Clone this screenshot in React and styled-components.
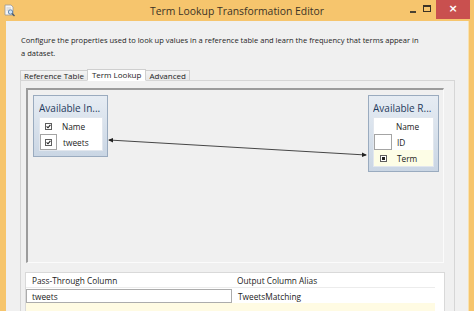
import React from 'react';
import styled, { createGlobalStyle } from 'styled-components';

const Global = createGlobalStyle`
  html, body { margin: 0; padding: 0; background: #f6c56d; }
  body { width: 474px; height: 311px; overflow: hidden; font-family: "Open Sans", "Noto Sans", sans-serif; }
`;

const Window = styled.div`
  width: 474px;
  height: 311px;
  display: flex;
  flex-direction: column;
  background: #f6c56d;
  overflow: hidden;
`;

const TitleBar = styled.div`
  height: 21px;
  width: 474px;
  flex: none;
  display: grid;
  grid-template-columns: 70px 334px 70px;
  align-items: start;
`;

const IconSlot = styled.div`
  padding: 4px 0 0 4px;
  display: flex;
`;

const Title = styled.div`
  text-align: center;
  font-size: 10.4px;
  line-height: 22px;
  color: #3b3326;
  white-space: nowrap;
`;

const Controls = styled.div`
  display: grid;
  grid-template-columns: 14px 14px 34px;
  column-gap: 1px;
  justify-content: end;
  padding-right: 4px;
  height: 19px;
`;

const MinButton = styled.div`
  height: 19px;
  position: relative;
  &::after {
    content: "";
    position: absolute;
    left: 4px;
    top: 11px;
    width: 6px;
    height: 2px;
    background: #4a4232;
  }
`;

const MaxButton = styled.div`
  height: 19px;
  position: relative;
  &::after {
    content: "";
    position: absolute;
    left: 2px;
    top: 5px;
    width: 8px;
    height: 7px;
    box-sizing: border-box;
    border: 1px solid #3b3326;
    border-top-width: 2px;
  }
`;

const CloseButton = styled.div`
  height: 19px;
  background: #c9504f;
  color: #fff;
  font-size: 11px;
  font-weight: 700;
  line-height: 18px;
  text-align: center;
  font-family: "DejaVu Sans", sans-serif;
`;

const Body = styled.div`
  flex: 1;
  min-height: 0;
  margin: 0 5px 0 6px;
  background: #f0f0f0;
  border-right: 1px solid #f9e2b0;
  padding: 13px 13px 0 14px;
  display: flex;
  flex-direction: column;
  overflow: hidden;
`;

const Description = styled.p`
  margin: 0;
  padding-left: 1px;
  font-size: 7.55px;
  line-height: 12.5px;
  color: #1e1e1e;
  white-space: nowrap;
`;

const TabStrip = styled.div`
  display: flex;
  align-items: flex-end;
  margin-top: 10px;
  height: 12px;
  position: relative;
  z-index: 1;
`;

const Tab = styled.div`
  height: ${p => (p.$active ? 12 : 10)}px;
  box-sizing: border-box;
  padding: 0 ${p => p.$pad}px;
  border: 1px solid #cfcfcf;
  border-bottom: ${p => (p.$active ? '1px solid #fff' : 'none')};
  margin-bottom: ${p => (p.$active ? -1 : 0)}px;
  background: ${p => (p.$active ? '#ffffff' : 'linear-gradient(#f4f4f4, #e8e8e8)')};
  font-size: 8px;
  line-height: ${p => (p.$active ? 10 : 9)}px;
  color: #222;
  white-space: nowrap;
  & + & { margin-left: -1px; }
`;

const TabPanel = styled.div`
  flex: 1;
  border: 1px solid #d6d6d6;
  border-bottom: none;
  padding: 7px 10px 0 5px;
  display: flex;
  flex-direction: column;
  background: #f0f0f0;
`;

const Designer = styled.div`
  height: 175px;
  flex: none;
  box-sizing: border-box;
  border-top: 2px solid #9c9c9c;
  border-left: 2px solid #9c9c9c;
  border-right: 1px solid #fbfbfb;
  border-bottom: 1px solid #fbfbfb;
  background: #f0f0f0;
  position: relative;
`;

const Node = styled.div`
  position: absolute;
  left: ${p => p.$x}px;
  top: ${p => p.$y}px;
  width: ${p => p.$w}px;
  height: ${p => p.$h}px;
  box-sizing: border-box;
  border: 1px solid #9aabbf;
  background: linear-gradient(#e6ecf3, #cad6e4);
  padding: 0 ${p => p.$pr}px 0 ${p => p.$pl}px;
  display: flex;
  flex-direction: column;
`;

const NodeTitle = styled.div`
  height: 21px;
  font-size: 10px;
  line-height: 25px;
  color: #1f3a5c;
  white-space: nowrap;
  overflow: hidden;
`;

const List = styled.div`
  background: #fff;
  border: 1px solid #e2e7ee;
  display: flex;
  flex-direction: column;
`;

const Row = styled.div`
  height: 16px;
  display: grid;
  grid-template-columns: ${p => p.$col}px 1fr;
  align-items: center;
  background: ${p => (p.$hl ? '#fdfde6' : 'transparent')};
`;

const CheckCell = styled.div`
  height: 16px;
  box-sizing: border-box;
  display: flex;
  align-items: center;
  justify-content: center;
  border: 1px solid ${p => (p.$framed ? '#a4a4a4' : 'transparent')};
`;

const RowText = styled.div`
  font-size: 8.3px;
  color: #222;
  padding-left: ${p => p.$pad}px;
  white-space: nowrap;
`;

const Box = styled.div`
  width: 7px;
  height: 7px;
  box-sizing: border-box;
  border: 1px solid #5e5e5e;
  background: #fff;
  display: flex;
  align-items: center;
  justify-content: center;
`;

const Dot = styled.div`
  width: 3px;
  height: 3px;
  background: #222;
`;

const Overlay = styled.svg`
  position: absolute;
  left: 0;
  top: 0;
  width: 100%;
  height: 100%;
  pointer-events: none;
  overflow: visible;
`;

const Grid = styled.div`
  margin: 9px -1px 0 -1px;
  flex: 1;
  background: #fff;
  border: 1px solid #d9d9d9;
  border-bottom: none;
  display: grid;
  grid-template-columns: 206px 203px 1fr;
  grid-template-rows: 15px 15px 1fr;
  align-content: start;
`;

const HeadCell = styled.div`
  font-size: 8.3px;
  line-height: 15px;
  color: #222;
  padding-left: ${p => p.$pad}px;
  border-bottom: 1px solid #ececec;
  white-space: nowrap;
`;

const Cell = styled.div`
  font-size: 8.3px;
  line-height: 13px;
  color: #222;
  padding-left: ${p => p.$pad}px;
  margin-top: 1px;
  box-sizing: border-box;
  border: 1px solid ${p => (p.$edit ? '#acacac' : 'transparent')};
  white-space: nowrap;
`;

const NewRow = styled.div`
  grid-column: 1 / 3;
  background: #fffbe3;
  min-height: 20px;
`;

const Spacer = styled.div``;

function Check() {
  return (
    <Box>
      <svg width="5" height="5" viewBox="0 0 5 5">
        <path d="M0.6 2.4 L2 3.8 L4.4 0.8" fill="none" stroke="#222" strokeWidth="1.1" />
      </svg>
    </Box>
  );
}

function AppIcon() {
  return (
    <svg width="12" height="13" viewBox="0 0 12 13">
      <path d="M1 1 H7 L9 3 V11 H1 Z" fill="#f7f7f7" stroke="#9a9a9a" strokeWidth="0.8" />
      <path d="M2.5 4 H7 M2.5 6 H6" stroke="#b8b8b8" strokeWidth="0.7" />
      <circle cx="6.5" cy="8" r="2.2" fill="#cfe3f5" stroke="#5a7fa8" strokeWidth="0.9" />
      <path d="M8 9.5 L10.5 12" stroke="#4a5a6a" strokeWidth="1.4" />
    </svg>
  );
}

export default function App() {
  return (
    <>
      <Global />
      <Window>
        <TitleBar>
          <IconSlot><AppIcon /></IconSlot>
          <Title>Term Lookup Transformation Editor</Title>
          <Controls>
            <MinButton />
            <MaxButton />
            <CloseButton>×</CloseButton>
          </Controls>
        </TitleBar>
        <Body>
          <Description>
            Configure the properties used to look up values in a reference table and learn the frequency that terms appear in
            <br />
            a dataset.
          </Description>
          <TabStrip>
            <Tab $pad={3}>Reference Table</Tab>
            <Tab $pad={4} $active>Term Lookup</Tab>
            <Tab $pad={3}>Advanced</Tab>
          </TabStrip>
          <TabPanel>
            <Designer>
              <Node $x={5} $y={5} $w={75} $h={62} $pl={5} $pr={4}>
                <NodeTitle>Available In...</NodeTitle>
                <List>
                  <Row $col={17}>
                    <CheckCell><Check /></CheckCell>
                    <RowText $pad={5}>Name</RowText>
                  </Row>
                  <Row $col={17}>
                    <CheckCell $framed><Check /></CheckCell>
                    <RowText $pad={6}>tweets</RowText>
                  </Row>
                </List>
              </Node>
              <Node $x={340} $y={5} $w={71} $h={77} $pl={4} $pr={4}>
                <NodeTitle>Available R...</NodeTitle>
                <List>
                  <Row $col={18}>
                    <CheckCell />
                    <RowText $pad={4}>Name</RowText>
                  </Row>
                  <Row $col={18}>
                    <CheckCell $framed />
                    <RowText $pad={5}>ID</RowText>
                  </Row>
                  <Row $col={18} $hl>
                    <CheckCell><Box><Dot /></Box></CheckCell>
                    <RowText $pad={5}>Term</RowText>
                  </Row>
                </List>
              </Node>
              <Overlay>
                <line x1="81" y1="50" x2="338" y2="65" stroke="#333" strokeWidth="0.9" />
                <path d="M80 50 L85 48 L85 52.4 Z" fill="#222" />
                <path d="M339 65 L334 62.6 L334 67 Z" fill="#222" />
              </Overlay>
            </Designer>
            <Grid>
              <HeadCell $pad={6}>Pass-Through Column</HeadCell>
              <HeadCell $pad={5}>Output Column Alias</HeadCell>
              <Spacer />
              <Cell $pad={5} $edit>tweets</Cell>
              <Cell $pad={5}>TweetsMatching</Cell>
              <Spacer />
              <NewRow />
            </Grid>
          </TabPanel>
        </Body>
      </Window>
    </>
  );
}
